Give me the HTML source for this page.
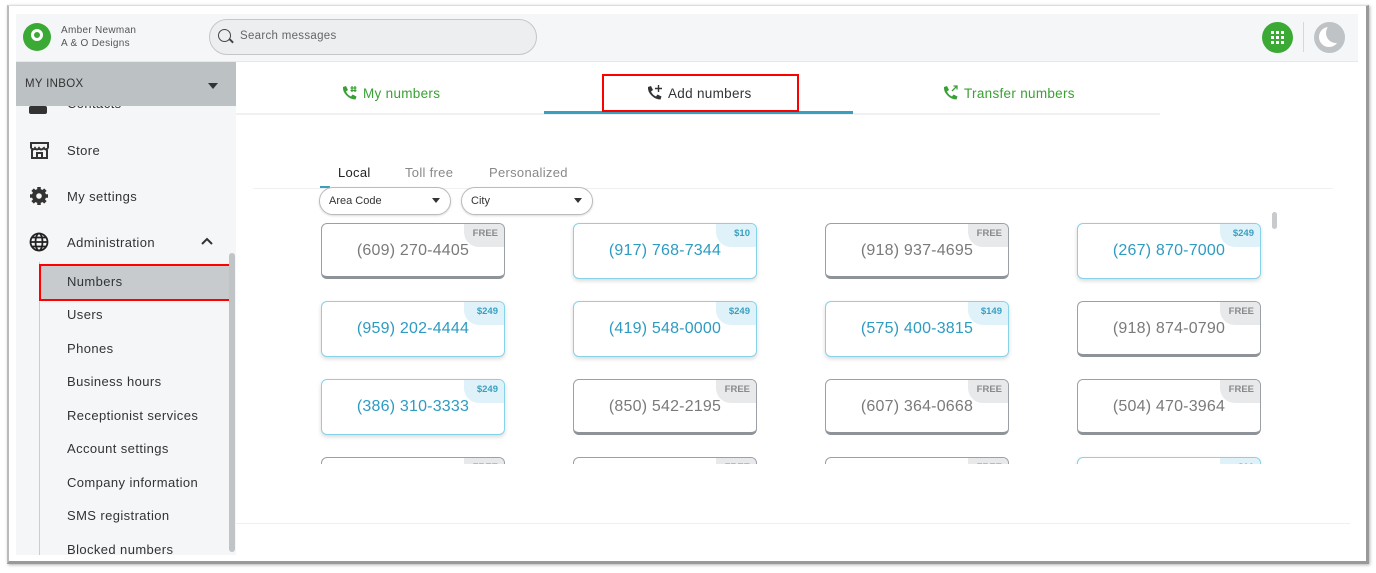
<!DOCTYPE html>
<html><head><meta charset="utf-8"><style>
*{box-sizing:border-box;margin:0;padding:0}
body{width:1376px;height:573px;background:#fff;font-family:"Liberation Sans",sans-serif;position:relative;overflow:hidden;color:#333}
.a{position:absolute}
.frame{left:7px;top:5px;width:1362px;height:559px;border:1px solid #ddd;border-left:2px solid #bbb;border-right:3px solid #999;border-bottom:3px solid #999;box-shadow:1px 1px 3px rgba(0,0,0,.3)}
.hdr{left:16px;top:14px;width:1342px;height:48px;background:#f5f6f8;border-bottom:1px solid #e6e8ea}
.side{left:16px;top:62px;width:220px;height:493px;background:#f5f6f8;overflow:hidden}
.item,.sub{position:absolute;left:51px;font-size:13px;color:#333;letter-spacing:.4px}
.card{position:absolute;width:184px;height:56px;border-radius:6px;background:#fff;overflow:hidden;text-align:center;font-size:16px;line-height:54px;letter-spacing:.2px}
.g{border:1px solid #9aa0a6;border-bottom:3px solid #8d9399;color:#7a7a7a}
.b{border:1px solid #86d2e8;color:#2d9bc2;box-shadow:0 2px 4px rgba(0,0,0,.15)}
.bd{position:absolute;right:0;top:0;width:40px;height:23px;border-bottom-left-radius:15px;font-size:9.5px;line-height:20px;text-align:right;padding-right:6px;font-weight:bold;letter-spacing:0}
.g .bd{background:#e8e9eb;color:#8a8a8a}
.b .bd{background:#dff2f9;color:#3a9fbf}
.tab{position:absolute;top:86px;font-size:13.5px;color:#3aa035;letter-spacing:.3px}
.tab svg{position:absolute;left:-22px;top:-1px}
.dd{position:absolute;top:187px;height:28px;border:1px solid #bbb;border-radius:14px;font-size:11px;line-height:26px;padding-left:9px;color:#333;box-shadow:0 1px 2px rgba(0,0,0,.15);background:#fff}
.dd:after{content:"";position:absolute;right:10px;top:10px;border:4px solid transparent;border-top:5px solid #333}
</style></head><body>
<div class="a frame"></div>
<div class="a hdr"></div>
<div class="a" style="left:23px;top:23px;width:28px;height:28px;border-radius:50%;background:#3aaa35"></div>
<div class="a" style="left:31px;top:29px;width:12px;height:12px;border-radius:50%;border:3px solid #fff"></div>
<div class="a" style="left:61px;top:24px;font-size:10px;color:#555;line-height:13px;letter-spacing:.3px">Amber Newman<br>A &amp; O Designs</div>
<div class="a" style="left:209px;top:19px;width:328px;height:36px;border-radius:18px;border:1px solid #c4c6c8;background:#eceef0"></div>
<div class="a" style="left:218px;top:29px;width:13px;height:13px;border-radius:50%;border:1.6px solid #444"></div>
<div class="a" style="left:229px;top:40px;width:5px;height:1.6px;background:#444;transform:rotate(45deg)"></div>
<div class="a" style="left:240px;top:30px;font-size:11.5px;color:#666;letter-spacing:.3px">Search messages</div>
<div class="a" style="left:1262px;top:22px;width:31px;height:31px;border-radius:50%;background:#3aaa35"></div>
<svg class="a" style="left:1271px;top:31px" width="13" height="13" fill="#fff"><g><rect x="0" y="0" width="3" height="3"/><rect x="5" y="0" width="3" height="3"/><rect x="10" y="0" width="3" height="3"/><rect x="0" y="5" width="3" height="3"/><rect x="5" y="5" width="3" height="3"/><rect x="10" y="5" width="3" height="3"/><rect x="0" y="10" width="3" height="3"/><rect x="5" y="10" width="3" height="3"/><rect x="10" y="10" width="3" height="3"/></g></svg>
<div class="a" style="left:1303px;top:22px;width:1px;height:30px;background:#d8d8d8"></div>
<div class="a" style="left:1314px;top:22px;width:31px;height:31px;border-radius:50%;background:#bfc3c6;overflow:hidden"><div style="position:absolute;left:5px;top:5px;width:20px;height:20px;border-radius:50%;background:#fff"></div><div style="position:absolute;left:12px;top:1px;width:20px;height:20px;border-radius:50%;background:#bfc3c6"></div></div>

<div class="a side">
<div class="a" style="left:0;top:0;width:220px;height:44px;background:#bcc1c4;z-index:2"></div>
<div class="a" style="left:9px;top:16px;font-size:11.5px;color:#333;z-index:3;letter-spacing:.3px">MY INBOX</div>
<div class="a" style="left:192px;top:21px;border:5px solid transparent;border-top:6px solid #333;z-index:3"></div>
<div class="item" style="top:34px">Contacts</div>
<div class="a" style="left:13px;top:44px;width:18px;height:8px;background:#333;border-radius:2px"></div>
<svg class="a" style="left:14px;top:79px" width="19" height="18" fill="none" stroke="#333" stroke-width="2"><path d="M1 7V2h17v5M2 7v10h15V7M1 7q2 3 4 0q2 3 4 0q2 3 5 0q2 3 4 0M7 17v-5h5v5"/></svg>
<div class="item" style="top:81px">Store</div>
<svg class="a" style="left:13px;top:124px" width="20" height="20"><circle cx="10" cy="10" r="7" fill="#333"/><g stroke="#333" stroke-width="3.5"><path d="M10 1v18M1 10h18M3.6 3.6l12.8 12.8M16.4 3.6L3.6 16.4"/></g><circle cx="10" cy="10" r="2.8" fill="#f5f6f8"/></svg>
<div class="item" style="top:127px">My settings</div>
<svg class="a" style="left:13px;top:170px" width="20" height="20" fill="none" stroke="#222" stroke-width="1.8"><circle cx="10" cy="10" r="8.5"/><ellipse cx="10" cy="10" rx="3.5" ry="8.5"/><path d="M1.5 10h17M3 5.5h14M3 14.5h14"/></svg>
<div class="item" style="top:173px">Administration</div>
<svg class="a" style="left:185px;top:175px" width="12" height="8" fill="none" stroke="#333" stroke-width="2"><path d="M1 7l5-5 5 5"/></svg>
<div class="a" style="left:23px;top:200px;width:1px;height:300px;background:#ccc"></div>
<div class="a" style="left:23px;top:202px;width:193px;height:37px;background:#c8cbce;border:2px solid #f00"></div>
<div class="sub" style="top:212px">Numbers</div>
<div class="sub" style="top:245px">Users</div>
<div class="sub" style="top:279px">Phones</div>
<div class="sub" style="top:312px">Business hours</div>
<div class="sub" style="top:346px">Receptionist services</div>
<div class="sub" style="top:379px">Account settings</div>
<div class="sub" style="top:413px">Company information</div>
<div class="sub" style="top:446px">SMS registration</div>
<div class="sub" style="top:480px">Blocked numbers</div>
<div class="a" style="left:213px;top:191px;width:6px;height:299px;border-radius:3px;background:#c0c4c7"></div>
</div>

<div class="a" style="left:236px;top:113px;width:924px;height:2px;background:#eef0f1"></div>
<div class="a" style="left:544px;top:111px;width:309px;height:3px;background:#3a9fbf"></div>
<div class="a" style="left:602px;top:74px;width:197px;height:38px;border:2px solid #f00"></div>
<div class="tab" style="left:363px"><svg width="16" height="16" fill="#3aa035"><path d="M2 2l3-1 2 4-2 1.5q1.5 3.5 5 5L11.5 9.5l4 2-1 3q-5 0-9-4T2 2z"/><path d="M11 1v6M14 1v6M9.5 3h6M9.5 5.5h6" stroke="#3aa035" stroke-width="1.2"/></svg>My numbers</div>
<div class="tab" style="left:668px;color:#333"><svg width="16" height="16" fill="#333"><path d="M2 2l3-1 2 4-2 1.5q1.5 3.5 5 5L11.5 9.5l4 2-1 3q-5 0-9-4T2 2z"/><path d="M12.5 0v7M9 3.5h7" stroke="#333" stroke-width="1.4"/></svg>Add numbers</div>
<div class="tab" style="left:964px"><svg width="16" height="16" fill="#3aa035"><path d="M2 2l3-1 2 4-2 1.5q1.5 3.5 5 5L11.5 9.5l4 2-1 3q-5 0-9-4T2 2z"/><path d="M10 6l5-5M11.5 1H15v3.5" stroke="#3aa035" stroke-width="1.3" fill="none"/></svg>Transfer numbers</div>

<div class="a" style="left:338px;top:165px;font-size:13px;color:#222;letter-spacing:.3px">Local</div>
<div class="a" style="left:405px;top:165px;font-size:13px;color:#888;letter-spacing:.3px">Toll free</div>
<div class="a" style="left:489px;top:165px;font-size:13px;color:#888;letter-spacing:.3px">Personalized</div>
<div class="a" style="left:253px;top:188px;width:1080px;height:1px;background:#eef0f1"></div>
<div class="a" style="left:320px;top:186px;width:10px;height:2px;background:#3a9fbf"></div>
<div class="dd" style="left:319px;width:132px">Area Code</div>
<div class="dd" style="left:461px;width:132px">City</div>
<div class="a" style="left:1272px;top:212px;width:5px;height:17px;border-radius:3px;background:#c8cbce"></div>

<div class="a" style="left:0;top:0;width:1376px;height:464px;overflow:hidden">
<div class="card g" style="left:321px;top:223px">(609) 270-4405<div class="bd">FREE</div></div>
<div class="card b" style="left:573px;top:223px">(917) 768-7344<div class="bd">$10</div></div>
<div class="card g" style="left:825px;top:223px">(918) 937-4695<div class="bd">FREE</div></div>
<div class="card b" style="left:1077px;top:223px">(267) 870-7000<div class="bd">$249</div></div>
<div class="card b" style="left:321px;top:301px">(959) 202-4444<div class="bd">$249</div></div>
<div class="card b" style="left:573px;top:301px">(419) 548-0000<div class="bd">$249</div></div>
<div class="card b" style="left:825px;top:301px">(575) 400-3815<div class="bd">$149</div></div>
<div class="card g" style="left:1077px;top:301px">(918) 874-0790<div class="bd">FREE</div></div>
<div class="card b" style="left:321px;top:379px">(386) 310-3333<div class="bd">$249</div></div>
<div class="card g" style="left:573px;top:379px">(850) 542-2195<div class="bd">FREE</div></div>
<div class="card g" style="left:825px;top:379px">(607) 364-0668<div class="bd">FREE</div></div>
<div class="card g" style="left:1077px;top:379px">(504) 470-3964<div class="bd">FREE</div></div>
<div class="card g" style="left:321px;top:457px"><div class="bd">FREE</div></div>
<div class="card g" style="left:573px;top:457px"><div class="bd">FREE</div></div>
<div class="card g" style="left:825px;top:457px"><div class="bd">FREE</div></div>
<div class="card b" style="left:1077px;top:457px"><div class="bd">$10</div></div>
</div>
<div class="a" style="left:236px;top:523px;width:1114px;height:1px;background:#eef0f1"></div>
</body></html>
